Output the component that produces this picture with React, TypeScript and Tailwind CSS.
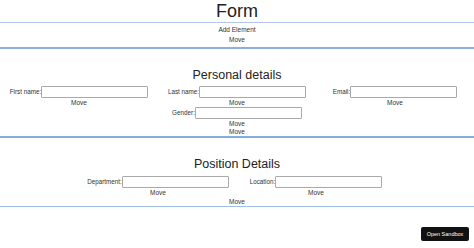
import React from 'react'

const font = { fontFamily: '"Liberation Sans", Arial, sans-serif' }

function Field({ label }: { label: string }) {
  return (
    <div className="flex w-[158px] flex-col items-center">
      <div className="flex items-center">
        <span className="text-[6.3px] leading-[9px] text-[#333]">{label}:</span>
        <input
          type="text"
          className="h-[12px] w-[107px] rounded-[1px] border border-[#a9a9a9] bg-white"
        />
      </div>
      <div className="text-[6.5px] leading-[9px] text-[#333]">Move</div>
    </div>
  )
}

export default function App() {
  return (
    <div className="relative h-[248px] w-full overflow-hidden bg-white" style={font}>
      <h1 className="h-[22px] pt-[1px] text-center text-[18px] leading-[20px] text-[#222]">Form</h1>
      <div className="h-px bg-[#b3c6e6]" />
      <div className="py-[2px] text-center text-[6.5px] leading-[10px] text-[#333]">
        <div>Add Element</div>
        <div>Move</div>
      </div>
      <div className="h-[2px] bg-[#8fb0dc]" />

      <section className="pt-[18px] text-center">
        <h2 className="text-[12.5px] leading-[17px] text-[#222]">Personal details</h2>
        <div className="mt-[1.5px] flex flex-wrap justify-center">
          <Field label="First name" />
          <Field label="Last name" />
          <Field label="Email" />
          <Field label="Gender" />
        </div>
        <div className="text-[6.5px] leading-[8.5px] text-[#333]">Move</div>
      </section>
      <div className="h-[2px] bg-[#86afdd]" />

      <section className="pt-[18px] text-center">
        <h2 className="text-[12.5px] leading-[17px] text-[#222]">Position Details</h2>
        <div className="mt-[2.5px] flex flex-wrap justify-center">
          <Field label="Department" />
          <Field label="Location" />
        </div>
        <div className="text-[6.5px] leading-[9px] text-[#333]">Move</div>
      </section>
      <div className="h-px bg-[#9dbfe3]" />

      <button className="absolute bottom-[7px] right-[5px] h-[14px] w-[48px] rounded-[2px] bg-[#111] text-[5.5px] text-white">
        Open Sandbox
      </button>
    </div>
  )
}
